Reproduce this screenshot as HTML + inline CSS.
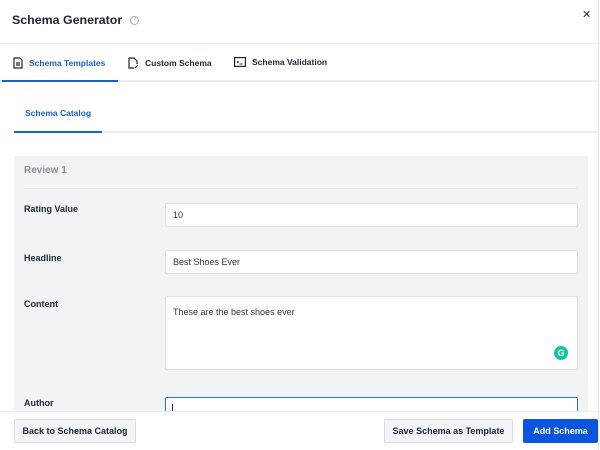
<!DOCTYPE html>
<html><head><style>
*{box-sizing:border-box;margin:0;padding:0}
body{width:600px;height:450px;overflow:hidden;background:#fff;font-family:"Liberation Sans",Arial,sans-serif;position:relative;color:#1f2433}
.abs{position:absolute}
.title{left:12px;top:13px;font-size:12.4px;font-weight:bold;color:#1f2433}
.lbl{font-size:9px;font-weight:bold;color:#1f2433}
.inp{position:absolute;left:165px;width:413px;background:#fff;border:1px solid #dcdfe4;border-radius:2px;font-size:9px;padding-left:7px;color:#333}
.btn{position:absolute;top:419px;height:24px;font-size:9px;font-weight:bold;border:1px solid #d9dce1;background:#f3f4f6;border-radius:2px;display:flex;align-items:center;justify-content:center;color:#1f2433}
.tab{position:absolute;top:57px;font-size:8.5px;font-weight:bold;display:flex;align-items:center;gap:6px}
</style></head><body>
<div class="abs" style="right:1px;top:0;width:1px;height:450px;background:#e4e6ea"></div>
<div class="abs title">Schema Generator</div>
<div class="abs" style="left:130px;top:16px;width:9px;height:9px;border:1px solid #aaa;border-radius:50%;font-size:6px;color:#aaa;text-align:center;line-height:7px">?</div>
<div class="abs" style="left:582px;top:8px;font-size:11px;color:#333">✕</div>
<div class="abs" style="left:0;top:43px;width:598px;height:1px;background:#ececef"></div>
<div class="tab" style="left:13px;color:#1a5fd6"><svg width="10" height="12" viewBox="0 0 10 12"><path d="M1 1h6l2 2v8H1z M3 6h4M3 8h4" fill="none" stroke="#1f2433" stroke-width="1.2"/></svg>Schema Templates</div>
<div class="tab" style="left:128px"><svg width="11" height="12" viewBox="0 0 11 12"><path d="M1 1h5l3 3v3M1 1v10h5 M7 11l3-3" fill="none" stroke="#1f2433" stroke-width="1.2"/></svg>Custom Schema</div>
<div class="tab" style="left:234px"><svg width="12" height="10" viewBox="0 0 12 10"><rect x="0.6" y="0.6" width="10.8" height="8.8" fill="none" stroke="#1f2433" stroke-width="1.2"/><path d="M3 4l1.5 1L3 6M5.5 7h3" stroke="#1f2433" fill="none"/></svg>Schema Validation</div>
<div class="abs" style="left:0;top:80px;width:598px;height:2px;background:#ececef"></div>
<div class="abs" style="left:2px;top:80px;width:116px;height:2px;background:#1a5fd6"></div>
<div class="abs" style="left:25px;top:108px;font-size:8.5px;font-weight:bold;color:#1a5fd6">Schema Catalog</div>
<div class="abs" style="left:14px;top:131px;width:584px;height:2px;background:#ececef"></div>
<div class="abs" style="left:14px;top:131px;width:88px;height:2px;background:#1a5fd6"></div>
<div class="abs" style="left:14px;top:156px;width:574px;height:256px;background:#f2f3f5"></div>
<div class="abs" style="left:24px;top:165px;font-size:10px;font-weight:bold;color:#8a8f98">Review 1</div>
<div class="abs" style="left:24px;top:188px;width:554px;height:1px;background:#e6e8eb"></div>
<div class="abs lbl" style="left:24px;top:204px">Rating Value</div>
<div class="inp" style="top:203px;height:24px;line-height:22px">10</div>
<div class="abs lbl" style="left:24px;top:253px">Headline</div>
<div class="inp" style="top:250px;height:24px;line-height:22px">Best Shoes Ever</div>
<div class="abs lbl" style="left:24px;top:299px">Content</div>
<div class="inp" style="top:296px;height:74px;padding-top:10px">These are the best shoes ever</div>
<div class="abs" style="left:554px;top:346px;width:14px;height:14px;border-radius:50%;background:#15c39a;color:#fff;font-size:9px;font-weight:bold;text-align:center;line-height:14px">G</div>
<div class="abs lbl" style="left:24px;top:398px">Author</div>
<div class="abs" style="left:165px;top:397px;width:413px;height:14px;border:1px solid #2f6fe0;border-bottom:none;border-radius:2px 2px 0 0;background:#fff"></div>
<div class="abs" style="left:172px;top:404px;width:1px;height:7px;background:#333"></div>
<div class="abs" style="left:0;top:411px;width:598px;height:39px;background:#fff;border-top:1px solid #ececef"></div>
<div class="btn" style="left:14px;width:122px">Back to Schema Catalog</div>
<div class="btn" style="left:384px;width:129px">Save Schema as Template</div>
<div class="btn" style="left:523px;width:75px;background:#0a55e0;border-color:#0a55e0;color:#fff">Add Schema</div>
</body></html>
